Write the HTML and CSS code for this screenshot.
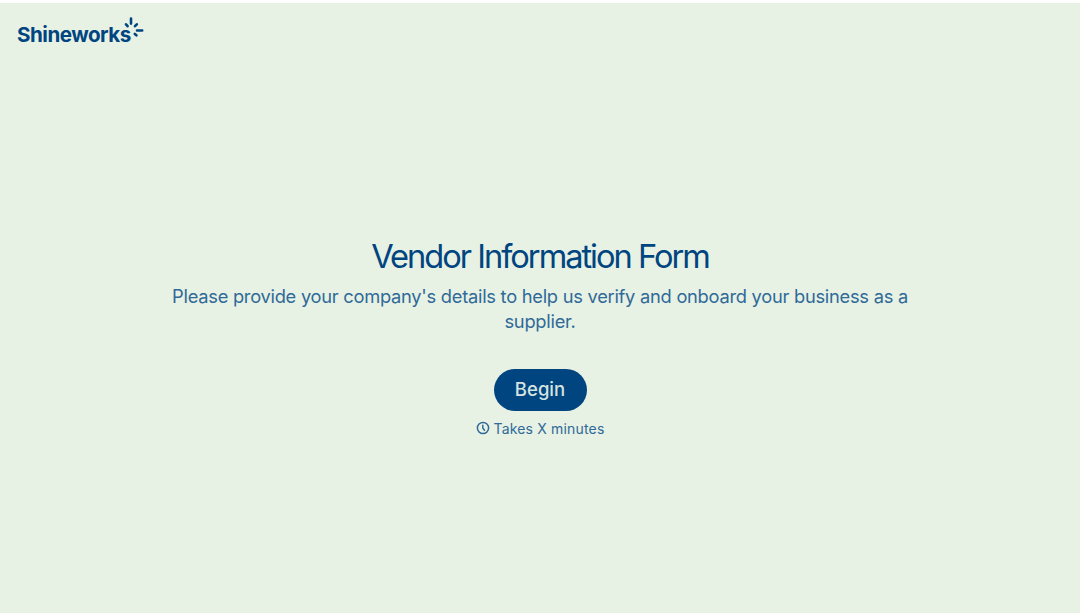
FILE: index.html
```html
<!DOCTYPE html>
<html lang="en">
<head>
<meta charset="utf-8">
<title>Vendor Information Form</title>
<link rel="stylesheet" href="styles.css">
</head>
<body>
<div class="page">
  <header class="header">
    <div class="brand"><span class="brand-name">Shineworks</span>
      <svg class="spark" viewBox="0 0 20 22" width="20" height="22"><path d="M7 2.6V7.6M2 8.3L3.6 10.2M12.8 8.3L11 10.2M13 14.5H18.2M10.8 17.9L12.4 19.3"/></svg>
    </div>
  </header>
  <main class="welcome">
    <h1 class="title">Vendor Information Form</h1>
    <p class="description">Please provide your company's details to help us verify and onboard your business as a<br>supplier.</p>
    <button class="begin" type="button">Begin</button>
    <div class="duration">
      <svg class="clock" viewBox="0 0 14 14" width="14" height="14"><circle cx="7" cy="7" r="5.6"/><path d="M6.8 4.2V7L8.5 9.2"/></svg>
      <span class="duration-text">Takes X minutes</span>
    </div>
  </main>
</div>
</body>
</html>
```
FILE: styles.css
```css
body { margin: 0; background: #fff; font-family: Inter, "Liberation Sans", sans-serif; }
.page { box-sizing: border-box; height: 613px; border-top: 3px solid #fff; background: #e7f1e4; color: #00457f; overflow: hidden; display: flex; flex-direction: column; }
.header { height: 60px; flex: none; padding: 13px 0 0 17px; box-sizing: border-box; }
.brand { display: flex; height: 32px; }
.brand-name { font-size: 20.6px; font-weight: 700; line-height: 38px; letter-spacing: -0.5px; width: 107px; white-space: nowrap; }
.spark { flex: none; fill: none; stroke: currentColor; stroke-width: 2.6; stroke-linecap: round; }
.welcome { display: flex; flex-direction: column; align-items: center; padding-top: 171px; }
.title { margin: 0; font-size: 32.6px; font-weight: 400; line-height: 44px; letter-spacing: -2px; white-space: nowrap; }
.description { margin: 6px 0 0; font-size: 18.3px; line-height: 25px; letter-spacing: -0.26px; text-align: center; color: #2f6a98; white-space: nowrap; }
.begin { margin: 34.5px 0 0; width: 93px; height: 42px; border: 0; border-radius: 21px; padding: 0 0 1px; background: #00457f; color: #d5e4e0; font: 500 18.5px/41px Inter, sans-serif; }
.duration { display: flex; align-items: center; gap: 4px; margin-top: 8.5px; height: 20px; color: #2f6a98; font-size: 14px; line-height: 20px; letter-spacing: 0.17px; }
.clock { fill: none; stroke: currentColor; stroke-width: 1.5; stroke-linecap: round; margin-top: -2px; }
```
